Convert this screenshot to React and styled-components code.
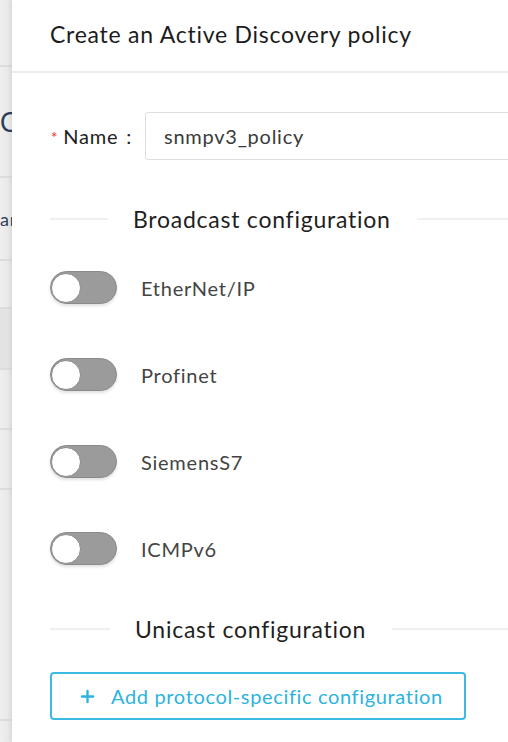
import styled, { createGlobalStyle } from "styled-components";
import { FiPlus } from "react-icons/fi";

const GlobalStyle = createGlobalStyle`
  html, body {
    margin: 0;
    padding: 0;
    overflow: hidden;
    background: #ffffff;
  }
  body {
    font-family: Lato, "Noto Sans", "Liberation Sans", sans-serif;
    letter-spacing: 0.75px;
  }
`;

const Page = styled.div`
  display: flex;
  width: 508px;
  height: 742px;
  overflow: hidden;
`;

// faded page behind the drawer
const Backdrop = styled.div`
  flex: 0 0 12px;
  display: flex;
  flex-direction: column;
  overflow: hidden;
  background: linear-gradient(to right, #efefef, #e6e6e6);
`;

const BackRow = styled.div`
  flex: 0 0 ${({ $h }) => $h}px;
  display: flex;
  align-items: center;
  border-bottom: 2px solid #dcdcdc;
  background: ${({ $dark }) => ($dark ? "#e3e3e3" : "transparent")};
  font-size: ${({ $fs }) => $fs || 18}px;
  color: #2c3e5a;
  white-space: nowrap;
  box-sizing: border-box;
`;

const Drawer = styled.div`
  flex: 0 0 540px;
  display: flex;
  flex-direction: column;
  background: #fff;
  box-shadow: -2px 0 4px rgba(0, 0, 0, 0.06);
`;

const Header = styled.div`
  height: 73px;
  box-sizing: border-box;
  display: flex;
  align-items: center;
  padding: 0 0 4px 38px;
  border-bottom: 2px solid #ececec;
  font-size: 23px;
  color: #1c1c1c;
`;

const Body = styled.div`
  display: flex;
  flex-direction: column;
  padding: 39px 24px 0 38px;
`;

const FieldRow = styled.div`
  display: flex;
  align-items: center;
`;

const Label = styled.label`
  flex: 0 0 95px;
  display: flex;
  align-items: center;
  justify-content: flex-end;
  padding-right: 13px;
  box-sizing: border-box;
  font-size: 20px;
  color: #222;
  &::before {
    content: "*";
    color: #f0301e;
    font-size: 16px;
    margin-right: 5px;
  }
  &::after {
    content: ":";
    margin-left: 8px;
  }
`;

const Input = styled.div`
  flex: 1;
  height: 48px;
  box-sizing: border-box;
  border: 1px solid #dedede;
  border-radius: 3px;
  display: flex;
  align-items: center;
  padding-left: 18px;
  font-size: 20px;
  color: #3a3a3a;
`;

const Divider = styled.div`
  display: flex;
  align-items: center;
  margin-top: ${({ $mt }) => $mt}px;
  height: 24px;
  font-size: 23px;
  color: #1f1f1f;
  &::before,
  &::after {
    content: "";
    height: 2px;
    background: #f0f0f0;
  }
  &::before {
    flex: 0 0 ${({ $lead }) => $lead}px;
    margin-right: 25px;
  }
  &::after {
    flex: 1;
    margin-left: 26px;
  }
`;

const ToggleList = styled.div`
  display: flex;
  flex-direction: column;
  gap: 54px;
  margin-top: 40px;
`;

const ToggleRow = styled.div`
  display: flex;
  align-items: center;
  gap: 24px;
  height: 33px;
  font-size: 20px;
  color: #444;
`;

const Track = styled.div`
  width: 67px;
  height: 33px;
  box-sizing: border-box;
  border-radius: 17px;
  background: #9b9b9b;
  border: 1.5px solid #8a8a8a;
  box-shadow: 0 2px 3px rgba(0, 0, 0, 0.12);
  display: flex;
  align-items: center;
`;

const Knob = styled.div`
  width: 30px;
  height: 30px;
  box-sizing: border-box;
  border-radius: 50%;
  background: #fff;
  border: 1.5px solid #8a8a8a;
`;

const AddButton = styled.button`
  margin-top: 31px;
  width: 416px;
  height: 48px;
  box-sizing: border-box;
  border: 2px solid #3bbbe2;
  border-radius: 4px;
  background: #fff;
  display: flex;
  align-items: center;
  gap: 14px;
  padding: 0 0 0 26px;
  font-family: inherit;
  letter-spacing: 0.65px;
  font-size: 20px;
  color: #2cb3de;
  svg {
    width: 19px;
    height: 19px;
    stroke-width: 3;
  }
`;

const backRows = [
  { h: 67 },
  { h: 111, text: "C", fs: 26 },
  { h: 83, text: "ar" },
  { h: 48 },
  { h: 61, dark: true },
  { h: 60 },
  { h: 60 },
  { h: 231 },
];

const protocols = ["EtherNet/IP", "Profinet", "SiemensS7", "ICMPv6"];

export default function App() {
  return (
    <Page>
      <GlobalStyle />
      <Backdrop>
        {backRows.map((r, i) => (
          <BackRow key={i} $h={r.h} $dark={r.dark} $fs={r.fs}>
            {r.text}
          </BackRow>
        ))}
      </Backdrop>
      <Drawer>
        <Header>Create an Active Discovery policy</Header>
        <Body>
          <FieldRow>
            <Label>Name</Label>
            <Input>snmpv3_policy</Input>
          </FieldRow>
          <Divider $mt={47} $lead={58}>Broadcast configuration</Divider>
          <ToggleList>
            {protocols.map((p) => (
              <ToggleRow key={p}>
                <Track>
                  <Knob />
                </Track>
                {p}
              </ToggleRow>
            ))}
          </ToggleList>
          <Divider $mt={52} $lead={60}>Unicast configuration</Divider>
          <AddButton>
            <FiPlus />
            Add protocol-specific configuration
          </AddButton>
        </Body>
      </Drawer>
    </Page>
  );
}
